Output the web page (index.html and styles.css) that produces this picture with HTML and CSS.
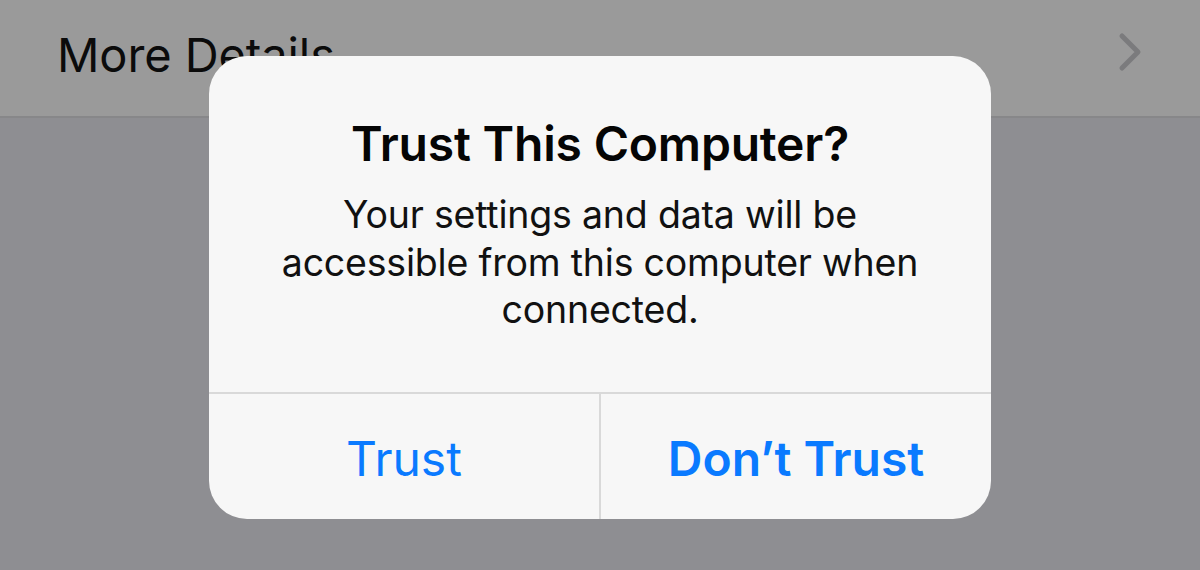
FILE: index.html
```html
<!DOCTYPE html>
<html lang="en">
<head>
<meta charset="utf-8">
<title>Trust This Computer?</title>
<link rel="stylesheet" href="styles.css">
</head>
<body>
<div class="screen">
  <div class="row">
    <span class="row-label">More Details</span>
    <svg class="chevron" width="26" height="40" viewBox="0 0 26 40"><path d="M4 4 L20 20 L4 36" fill="none" stroke="#7b7b7d" stroke-width="5" stroke-linecap="round" stroke-linejoin="round"/></svg>
  </div>
  <div class="dim"></div>
  <div class="alert">
    <div class="alert-content">
      <h1 class="alert-title">Trust This Computer?</h1>
      <p class="alert-message">Your settings and data will be<br>accessible from this computer when<br>connected.</p>
    </div>
    <div class="alert-actions">
      <div class="action">Trust</div>
      <div class="action action-bold">Don’t Trust</div>
    </div>
  </div>
</div>
</body>
</html>
```
FILE: styles.css
```css
html, body {
  margin: 0;
  padding: 0;
}
body {
  width: 1200px;
  height: 570px;
  overflow: hidden;
  background: #8e8e92;
  font-family: Inter, "Noto Sans", "Liberation Sans", sans-serif;
}
.screen {
  position: relative;
  width: 1200px;
  height: 570px;
  display: flex;
  flex-direction: column;
}
.row {
  height: 116px;
  background: #9a9a9a;
  border-bottom: 2px solid #878789;
  display: flex;
  align-items: center;
  justify-content: space-between;
  padding: 0 56px 0 57px;
  box-sizing: content-box;
}
.row-label {
  font-size: 47px;
  color: #0b0b0b;
  letter-spacing: -0.1px;
  margin-top: -8px;
}
.chevron {
  margin-top: -12px;
}
.dim {
  flex: 1;
}
.alert {
  position: absolute;
  left: 209px;
  top: 56px;
  width: 782px;
  height: 463px;
  background: #f7f7f7;
  border-radius: 38px;
  display: flex;
  flex-direction: column;
  overflow: hidden;
}
.alert-content {
  height: 338px;
  border-bottom: 2px solid #d9d9d9;
  display: flex;
  flex-direction: column;
  align-items: center;
  padding-top: 60px;
  box-sizing: border-box;
}
.alert-title {
  margin: 0;
  font-size: 48px;
  line-height: 56px;
  font-weight: 600;
  color: #050505;
  letter-spacing: -0.2px;
}
.alert-message {
  margin: 19px 0 0;
  font-size: 37.5px;
  line-height: 47.5px;
  text-align: center;
  color: #111;
  letter-spacing: -0.2px;
}
.alert-actions {
  flex: 1;
  display: flex;
}
.action {
  flex: 1;
  display: flex;
  align-items: center;
  justify-content: center;
  font-size: 48px;
  color: #0a7aff;
  padding-top: 4px;
}
.action + .action {
  border-left: 2px solid #d9d9d9;
}
.action-bold {
  font-weight: 600;
}
```
